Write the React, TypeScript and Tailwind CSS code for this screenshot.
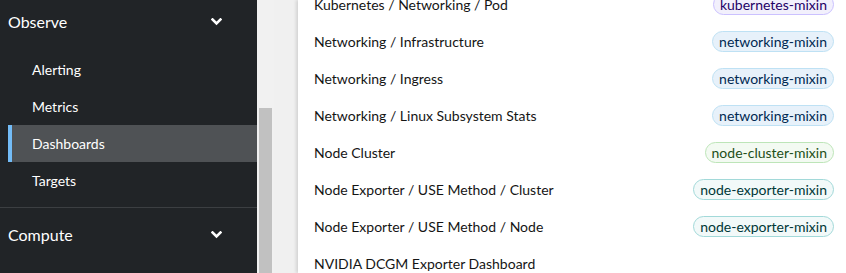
import React from "react";

const ChevronDown = () => (
  <svg width="11" height="8" viewBox="0 0 11 8" className="shrink-0">
    <polyline points="1.5,1.5 5.5,5.5 9.5,1.5" fill="none" stroke="#fff" strokeWidth="2.6" strokeLinecap="square" />
  </svg>
);

const navItems = [
  { label: "Alerting", active: false },
  { label: "Metrics", active: false },
  { label: "Dashboards", active: true },
  { label: "Targets", active: false },
];

const badgeStyles: Record<string, string> = {
  purple: "bg-[#f2f0fc] border-[#cbc1ff] text-[#1f0066]",
  blue: "bg-[#e7f1fa] border-[#bee1f4] text-[#002952]",
  green: "bg-[#f3faf2] border-[#bde5b8] text-[#1e4f18]",
  cyan: "bg-[#f2f9f9] border-[#a2d9d9] text-[#003737]",
};

const dashboards = [
  { name: "Kubernetes / Networking / Pod", tag: "kubernetes-mixin", color: "purple" },
  { name: "Networking / Infrastructure", tag: "networking-mixin", color: "blue" },
  { name: "Networking / Ingress", tag: "networking-mixin", color: "blue" },
  { name: "Networking / Linux Subsystem Stats", tag: "networking-mixin", color: "blue" },
  { name: "Node Cluster", tag: "node-cluster-mixin", color: "green" },
  { name: "Node Exporter / USE Method / Cluster", tag: "node-exporter-mixin", color: "cyan" },
  { name: "Node Exporter / USE Method / Node", tag: "node-exporter-mixin", color: "cyan" },
  { name: "NVIDIA DCGM Exporter Dashboard", tag: "", color: "" },
];

export default function App() {
  return (
    <div className="flex h-[273px] w-[846px] overflow-hidden bg-[#f0f0f0] font-['Lato','Open_Sans',sans-serif]">
      {/* Sidebar */}
      <div className="w-[257px] shrink-0 bg-[#212427] text-white">
        <div className="flex h-[44px] items-center justify-between pl-[8px] pr-[35px] text-[16px]">
          <span>Observe</span>
          <ChevronDown />
        </div>
        <div className="pt-[7px] pb-[8px]">
          {navItems.map((item) => (
            <div
              key={item.label}
              className={
                item.active
                  ? "ml-[8px] flex h-[37px] items-center border-l-[4px] border-[#73bcf7] bg-[#4f5255] pl-[20px] text-[14px]"
                  : "flex h-[37px] items-center pl-[32px] text-[14px]"
              }
            >
              <span className="-mt-[1px]">{item.label}</span>
            </div>
          ))}
        </div>
        <div className="h-px bg-[#3c3f42]" />
        <div className="flex h-[53px] items-center justify-between pl-[8px] pr-[35px] text-[16px]">
          <span>Compute</span>
          <ChevronDown />
        </div>
      </div>

      {/* Sidebar scrollbar */}
      <div className="flex w-[17px] shrink-0 flex-col bg-[#f1f1f1] pl-[2px] pr-[2px]">
        <div className="h-[108px] shrink-0" />
        <div className="flex-1 bg-[#c1c1c1]" />
      </div>

      <div className="w-[24px] shrink-0" />

      {/* Content */}
      <div className="flex-1 bg-white shadow-[-2px_0_3px_rgba(0,0,0,0.12)]">
        <div className="-mt-[14px] pl-[16px] pr-[12px]">
          {dashboards.map((d) => (
            <div key={d.name} className="flex h-[37px] items-center justify-between text-[14px] text-[#151515]">
              <span>{d.name}</span>
              {d.tag && (
                <span
                  className={`flex h-[21px] items-center rounded-full border px-[6px] text-[14px] ${badgeStyles[d.color]}`}
                >
                  {d.tag}
                </span>
              )}
            </div>
          ))}
        </div>
      </div>
    </div>
  );
}
